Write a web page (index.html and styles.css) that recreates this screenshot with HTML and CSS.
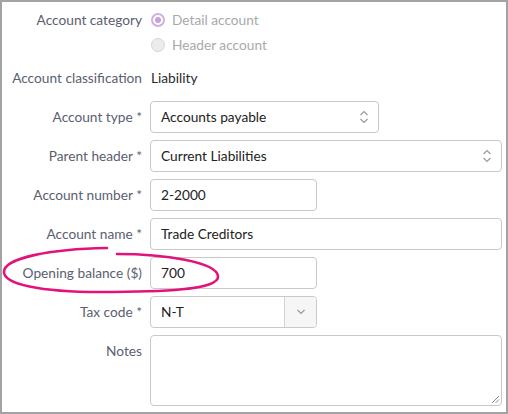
FILE: index.html
```html
<!DOCTYPE html>
<html>
<head>
<meta charset="utf-8">
<link rel="stylesheet" href="styles.css">
</head>
<body>
<div class="frame">
  <form class="form">
    <div class="row row-radio">
      <div class="label">Account category</div>
      <div class="radios">
        <div class="radio-opt"><span class="radio checked"></span><span class="radio-text">Detail account</span></div>
        <div class="radio-opt"><span class="radio"></span><span class="radio-text">Header account</span></div>
      </div>
    </div>
    <div class="row row-static">
      <div class="label">Account classification</div>
      <div class="static">Liability</div>
    </div>
    <div class="row">
      <div class="label">Account type *</div>
      <div class="control select w-229">Accounts payable<span class="updown"><svg width="10" height="16" viewBox="0 0 10 16"><path d="M1.5 6 L5 2.5 L8.5 6 M1.5 10 L5 13.5 L8.5 10" fill="none" stroke="#9a9a9a" stroke-width="1.2"/></svg></span></div>
    </div>
    <div class="row">
      <div class="label">Parent header *</div>
      <div class="control select w-full">Current Liabilities<span class="updown"><svg width="10" height="16" viewBox="0 0 10 16"><path d="M1.5 6 L5 2.5 L8.5 6 M1.5 10 L5 13.5 L8.5 10" fill="none" stroke="#9a9a9a" stroke-width="1.2"/></svg></span></div>
    </div>
    <div class="row">
      <div class="label">Account number *</div>
      <div class="control w-167">2-2000</div>
    </div>
    <div class="row">
      <div class="label">Account name *</div>
      <div class="control w-full">Trade Creditors</div>
    </div>
    <div class="row">
      <div class="label">Opening balance ($)</div>
      <div class="control w-167">700</div>
    </div>
    <div class="row">
      <div class="label">Tax code *</div>
      <div class="control combo w-167"><span class="combo-text">N-T</span><span class="combo-btn"><svg width="10" height="6" viewBox="0 0 10 6"><path d="M1.5 1 L5 4.5 L8.5 1" fill="none" stroke="#9a9a9a" stroke-width="1.2"/></svg></span></div>
    </div>
    <div class="row row-notes">
      <div class="label">Notes</div>
      <div class="control textarea w-full"><svg class="grip" width="10" height="10" viewBox="0 0 10 10"><path d="M9 2 L2 9 M9 5.5 L5.5 9" stroke="#8a8a8a" stroke-width="1"/></svg></div>
    </div>
  </form>
  <svg class="circle" width="508" height="414" viewBox="0 0 508 414"><path d="M117,254 C165,254 216,262 218,276 C220,290 160,292 100,292 C40,292 4,284 4,272 C4,258 50,249 107,248" fill="none" stroke="#e3127a" stroke-width="2.6" stroke-linecap="round"/></svg>
</div>
</body>
</html>
```
FILE: styles.css
```css
html, body { margin: 0; padding: 0; background: #fff; }
.frame {
  position: relative;
  width: 508px;
  height: 414px;
  box-sizing: border-box;
  border: 2px solid #a3a3a3;
  font-family: "Segoe UI", Lato, "Liberation Sans", sans-serif;
  font-size: 13.7px;
  color: #222;
  overflow: hidden;
}
.form {
  display: flex;
  flex-direction: column;
  gap: 7px;
  padding: 5px 4px 0 0;
  margin: 0;
}
.row {
  display: flex;
  align-items: flex-start;
  gap: 8px;
}
.label {
  width: 140px;
  flex: none;
  text-align: right;
  line-height: 32px;
  color: #5a6070;
  white-space: nowrap;
}
.row-radio .label, .row-radio .radio-opt { line-height: 25px; height: 25px; }
.radios { display: flex; flex-direction: column; }
.radio-opt { display: flex; align-items: center; gap: 7px; color: #a9a9a9; padding-left: 1px; }
.radio {
  width: 14px; height: 14px; box-sizing: border-box;
  border-radius: 50%;
  border: 1px solid #d6d6d6;
  background: #ececec;
  position: relative;
}
.radio.checked { border: 2px solid #cfb0e2; background: #fff; }
.radio.checked::after {
  content: ""; position: absolute; left: 2px; top: 2px;
  width: 6px; height: 6px; border-radius: 50%; background: #c6a1dc;
}
.row-radio { margin-bottom: 4px; }
.row-static { margin-bottom: 6px; }
.row-static .label, .static { line-height: 20px; }
.static { color: #2a2a2a; padding-left: 1px; }
.control {
  box-sizing: border-box;
  height: 32px;
  border: 1px solid #c9c9c9;
  border-radius: 4px;
  padding: 0 10px;
  line-height: 30px;
  color: #222;
  background: #fff;
  position: relative;
}
.w-229 { width: 229px; }
.w-167 { width: 167px; }
.w-full { flex: 1; }
.select { display: flex; justify-content: space-between; align-items: center; }
.updown { display: flex; align-items: center; margin-right: -1px; }
.combo { display: flex; padding: 0; }
.combo-text { flex: 1; padding-left: 10px; }
.combo-btn {
  width: 31px; flex: none;
  border-left: 1px solid #d2d2d2;
  background: #f6f6f6;
  border-radius: 0 3px 3px 0;
  display: flex; align-items: center; justify-content: center;
}
.textarea { height: 71px; }
.grip { position: absolute; right: 1px; bottom: 1px; }
.circle { position: absolute; left: -2px; top: -2px; pointer-events: none; }
```
